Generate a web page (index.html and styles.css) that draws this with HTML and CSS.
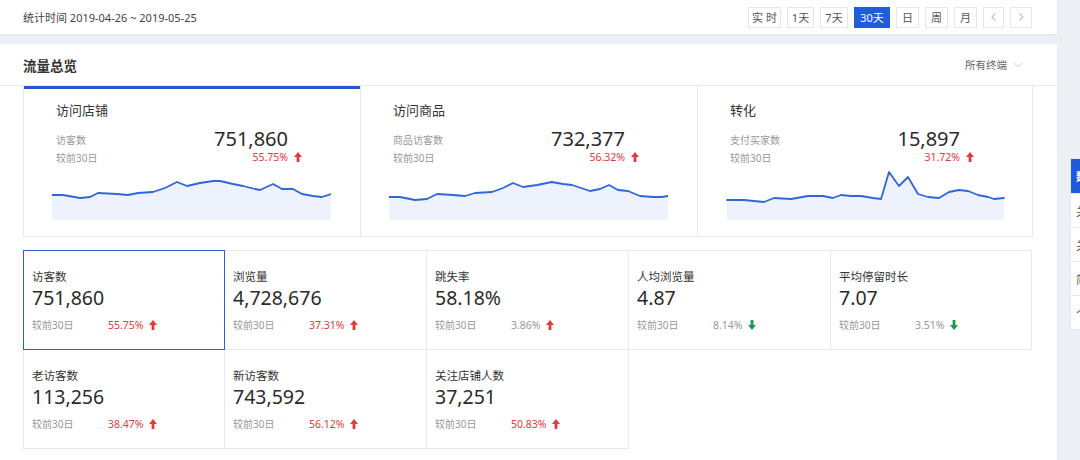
FILE: index.html
```html
<!DOCTYPE html>
<html lang="zh-CN">
<head>
<meta charset="utf-8">
<title>流量总览</title>
<link rel="stylesheet" href="styles.css">
</head>
<body>
<div class="page">
  <div class="card topbar">
    <div class="range">统计时间 2019-04-26 ~ 2019-05-25</div>
    <div class="btns">
      <span class="btn w33">实 时</span>
      <span class="btn w27">1天</span>
      <span class="btn w28">7天</span>
      <span class="btn w36 on">30天</span>
      <span class="btn w23">日</span>
      <span class="btn w23">周</span>
      <span class="btn w23">月</span>
      <span class="btn w21"><svg width="8" height="10" viewBox="0 0 8 10"><path d="M5.5 1.5 L2 5 L5.5 8.5" fill="none" stroke="#c4c4c4" stroke-width="1.2"/></svg></span>
      <span class="btn w22"><svg width="8" height="10" viewBox="0 0 8 10"><path d="M2.5 1.5 L6 5 L2.5 8.5" fill="none" stroke="#c4c4c4" stroke-width="1.2"/></svg></span>
    </div>
  </div>

  <div class="card main">
    <div class="head">
      <h2>流量总览</h2>
      <div class="device">所有终端 <svg width="10" height="6" viewBox="0 0 10 6"><path d="M1 0.8 L5 4.8 L9 0.8" fill="none" stroke="#c8c8c8" stroke-width="1"/></svg></div>
    </div>

    <div class="overview">
      <div class="ov active">
        <div class="ov-title">访问店铺</div>
        <div class="ov-row">
          <span class="sub">访客数</span>
          <span class="big">751,860</span>
        </div>
        <div class="ov-row">
          <span class="sub">较前30日</span>
          <span class="pct up">55.75%<svg class="arr" width="8" height="10" viewBox="0 0 8 10"><path d="M4 0 L8 5 H5.4 V10 H2.6 V5 H0 Z" fill="#e4393c"/></svg></span>
        </div>
        <svg class="spark" width="279" height="52" viewBox="0 -7 279 52">
          <path class="area" d="M0 20 L11 20 L28 23 L38 22 L46 18 L65 19 L76 20 L86 18 L101 17 L113 13 L125 7 L135 11 L148 8 L161 6 L168 6 L181 9 L191 11 L203 14 L208 15 L221 9 L230 14 L241 14 L250 19 L261 21 L270 22 L279 19 L279 45 L0 45 Z"/>
          <path class="line" d="M0 20 L11 20 L28 23 L38 22 L46 18 L65 19 L76 20 L86 18 L101 17 L113 13 L125 7 L135 11 L148 8 L161 6 L168 6 L181 9 L191 11 L203 14 L208 15 L221 9 L230 14 L241 14 L250 19 L261 21 L270 22 L279 19"/>
        </svg>
      </div>
      <div class="ov">
        <div class="ov-title">访问商品</div>
        <div class="ov-row">
          <span class="sub">商品访客数</span>
          <span class="big">732,377</span>
        </div>
        <div class="ov-row">
          <span class="sub">较前30日</span>
          <span class="pct up">56.32%<svg class="arr" width="8" height="10" viewBox="0 0 8 10"><path d="M4 0 L8 5 H5.4 V10 H2.6 V5 H0 Z" fill="#e4393c"/></svg></span>
        </div>
        <svg class="spark" width="279" height="52" viewBox="0 -7 279 52">
          <path class="area" d="M0 22 L11 22 L26 25 L38 24 L48 19 L64 20 L76 21 L86 18 L103 17 L114 13 L124 8 L134 12 L148 10 L163 7 L174 9 L183 10 L201 16 L211 14 L220 10 L229 15 L239 16 L251 21 L264 22 L273 22 L279 21 L279 45 L0 45 Z"/>
          <path class="line" d="M0 22 L11 22 L26 25 L38 24 L48 19 L64 20 L76 21 L86 18 L103 17 L114 13 L124 8 L134 12 L148 10 L163 7 L174 9 L183 10 L201 16 L211 14 L220 10 L229 15 L239 16 L251 21 L264 22 L273 22 L279 21"/>
        </svg>
      </div>
      <div class="ov">
        <div class="ov-title">转化</div>
        <div class="ov-row">
          <span class="sub">支付买家数</span>
          <span class="big">15,897</span>
        </div>
        <div class="ov-row">
          <span class="sub">较前30日</span>
          <span class="pct up">31.72%<svg class="arr" width="8" height="10" viewBox="0 0 8 10"><path d="M4 0 L8 5 H5.4 V10 H2.6 V5 H0 Z" fill="#e4393c"/></svg></span>
        </div>
        <svg class="spark" width="279" height="52" viewBox="-1 0 279 52">
          <path class="area" d="M0 32 L17 32 L37 34 L47 30 L64 31 L81 28 L96 28 L106 30 L114 27 L124 28 L134 28 L146 30 L154 31 L162 4 L172 18 L181 9 L191 26 L201 29 L212 30 L222 24 L232 22 L241 23 L251 27 L261 29 L267 31 L277 30 L277 52 L0 52 Z"/>
          <path class="line" d="M0 32 L17 32 L37 34 L47 30 L64 31 L81 28 L96 28 L106 30 L114 27 L124 28 L134 28 L146 30 L154 31 L162 4 L172 18 L181 9 L191 26 L201 29 L212 30 L222 24 L232 22 L241 23 L251 27 L261 29 L267 31 L277 30"/>
        </svg>
      </div>
    </div>

    <div class="metrics">
      <div class="cell sel">
        <div class="m-label">访客数</div>
        <div class="m-num">751,860</div>
        <div class="m-foot"><span class="m-cmp">较前30日</span><span class="red">55.75%</span><svg class="arr" width="8" height="10" viewBox="0 0 8 10"><path d="M4 0 L8 5 H5.4 V10 H2.6 V5 H0 Z" fill="#e4393c"/></svg></div>
      </div>
      <div class="cell">
        <div class="m-label">浏览量</div>
        <div class="m-num">4,728,676</div>
        <div class="m-foot"><span class="m-cmp">较前30日</span><span class="red">37.31%</span><svg class="arr" width="8" height="10" viewBox="0 0 8 10"><path d="M4 0 L8 5 H5.4 V10 H2.6 V5 H0 Z" fill="#e4393c"/></svg></div>
      </div>
      <div class="cell">
        <div class="m-label">跳失率</div>
        <div class="m-num">58.18%</div>
        <div class="m-foot"><span class="m-cmp">较前30日</span><span class="grey">3.86%</span><svg class="arr" width="8" height="10" viewBox="0 0 8 10"><path d="M4 0 L8 5 H5.4 V10 H2.6 V5 H0 Z" fill="#e4393c"/></svg></div>
      </div>
      <div class="cell">
        <div class="m-label">人均浏览量</div>
        <div class="m-num">4.87</div>
        <div class="m-foot"><span class="m-cmp">较前30日</span><span class="grey">8.14%</span><svg class="arr" width="8" height="10" viewBox="0 0 8 10"><path d="M4 10 L8 5 H5.4 V0 H2.6 V5 H0 Z" fill="#1b9a4a"/></svg></div>
      </div>
      <div class="cell">
        <div class="m-label">平均停留时长</div>
        <div class="m-num">7.07</div>
        <div class="m-foot"><span class="m-cmp">较前30日</span><span class="grey">3.51%</span><svg class="arr" width="8" height="10" viewBox="0 0 8 10"><path d="M4 10 L8 5 H5.4 V0 H2.6 V5 H0 Z" fill="#1b9a4a"/></svg></div>
      </div>
      <div class="cell">
        <div class="m-label">老访客数</div>
        <div class="m-num">113,256</div>
        <div class="m-foot"><span class="m-cmp">较前30日</span><span class="red">38.47%</span><svg class="arr" width="8" height="10" viewBox="0 0 8 10"><path d="M4 0 L8 5 H5.4 V10 H2.6 V5 H0 Z" fill="#e4393c"/></svg></div>
      </div>
      <div class="cell">
        <div class="m-label">新访客数</div>
        <div class="m-num">743,592</div>
        <div class="m-foot"><span class="m-cmp">较前30日</span><span class="red">56.12%</span><svg class="arr" width="8" height="10" viewBox="0 0 8 10"><path d="M4 0 L8 5 H5.4 V10 H2.6 V5 H0 Z" fill="#e4393c"/></svg></div>
      </div>
      <div class="cell">
        <div class="m-label">关注店铺人数</div>
        <div class="m-num">37,251</div>
        <div class="m-foot"><span class="m-cmp">较前30日</span><span class="red">50.83%</span><svg class="arr" width="8" height="10" viewBox="0 0 8 10"><path d="M4 0 L8 5 H5.4 V10 H2.6 V5 H0 Z" fill="#e4393c"/></svg></div>
      </div>
    </div>
  </div>
</div>

<div class="side">
  <div class="side-item first">数据</div>
  <div class="side-item">关注</div>
  <div class="side-item">关联</div>
  <div class="side-item">简报</div>
  <div class="side-item">个人</div>
</div>
</body>
</html>
```

FILE: styles.css
```css
* { box-sizing: border-box; }
html, body { margin: 0; padding: 0; }
body {
  width: 1080px;
  height: 460px;
  overflow: hidden;
  background: #eceff3;
  font-family: "Noto Sans", "Noto Sans CJK SC", sans-serif;
  color: #333;
}
.page { width: 1057px; }
.card {
  background: #fff;
  box-shadow: 0 1px 2px rgba(0,0,0,0.05);
}
.topbar {
  height: 34px;
  display: flex;
  align-items: center;
  justify-content: space-between;
  padding: 0 25px 0 23px;
}
.range { font-size: 11px; color: #444; }
.btns { display: flex; gap: 6px; }
.btn {
  height: 21px;
  display: flex;
  align-items: center;
  justify-content: center;
  border: 1px solid #e4e6ea;
  font-size: 11px;
  color: #555;
  background: #fff;
}
.btn.on { background: #1e5ddc; border-color: #1e5ddc; color: #fff; }
.w33 { width: 33px; } .w27 { width: 27px; } .w28 { width: 28px; }
.w36 { width: 36px; } .w23 { width: 23px; } .w22 { width: 22px; } .w21 { width: 21px; }

.main { margin-top: 10px; height: 430px; }
.head {
  height: 42px;
  display: flex;
  align-items: center;
  justify-content: space-between;
  padding: 0 34px 0 23px;
  border-bottom: 1px solid #e8eaee;
}
.head h2 { margin: 0; font-size: 13.5px; font-weight: 700; color: #333; }
.device { font-size: 10.5px; color: #666; display: flex; align-items: center; gap: 6px; }

.overview {
  margin: 0 25px 0 23px;
  display: grid;
  grid-template-columns: 337px 337px 335px;
  border-left: 1px solid #e8eaee;
}
.ov {
  border-right: 1px solid #e8eaee;
  border-bottom: 1px solid #e8eaee;
  padding: 14px 72px 16px 32px;
  position: relative;
  height: 151px;
}
.ov.active { box-shadow: inset 0 3px 0 #2257d6; }
.ov-title { font-size: 13px; line-height: 20px; color: #333; }
.ov-row {
  display: flex;
  justify-content: space-between;
  align-items: center;
}
.ov-row:nth-child(2) { margin-top: 8px; height: 22px; }
.ov-row:nth-child(3) { height: 14px; }
.sub { font-size: 10px; color: #999; }
.big { font-size: 20px; color: #2b2b2b; line-height: 22px; }
.pct { font-size: 10.5px; color: #e4393c; position: relative; }
.pct .arr { position: absolute; right: -14px; top: 2px; }
.spark { display: block; margin: 4px 0 0 -4px; }
.spark .area { fill: #edf2fc; }
.spark .line { fill: none; stroke: #2f67d8; stroke-width: 1.8; stroke-linejoin: round; stroke-linecap: round; }

.metrics {
  margin: 13px 25px 0 23px;
  display: grid;
  grid-template-columns: 202px 202px 202px 202px 201px;
}
.cell {
  height: 99px;
  border-right: 1px solid #e8eaee;
  border-bottom: 1px solid #e8eaee;
  padding: 18px 8px 0 8px;
}
.cell:nth-child(-n+5) { border-top: 1px solid #e8eaee; height: 100px; }
.cell:nth-child(5n+1) { border-left: 1px solid #e8eaee; }
.cell.sel { border: 1px solid #2a5fd6; }
.m-label { font-size: 11.5px; line-height: 16px; color: #333; }
.m-num { font-size: 19.5px; line-height: 26px; color: #2b2b2b; }
.m-foot { margin-top: 6px; display: flex; align-items: center; font-size: 10.5px; line-height: 16px; }
.m-cmp { width: 76px; color: #999; font-size: 10px; }
.red { color: #e4393c; }
.grey { color: #999; }
.m-foot .arr { margin-left: 5px; }

.side {
  position: fixed;
  left: 1070px;
  top: 158px;
  width: 60px;
  background: #fff;
  border: 1px solid #e5e7ea;
}
.side-item {
  height: 34px;
  padding-left: 5px;
  display: flex;
  align-items: center;
  font-size: 11px;
  color: #555;
  border-top: 1px solid #e8eaee;
}
.side-item.first { border-top: 0; background: #1f5ad8; color: #fff; font-weight: 700; }
```
